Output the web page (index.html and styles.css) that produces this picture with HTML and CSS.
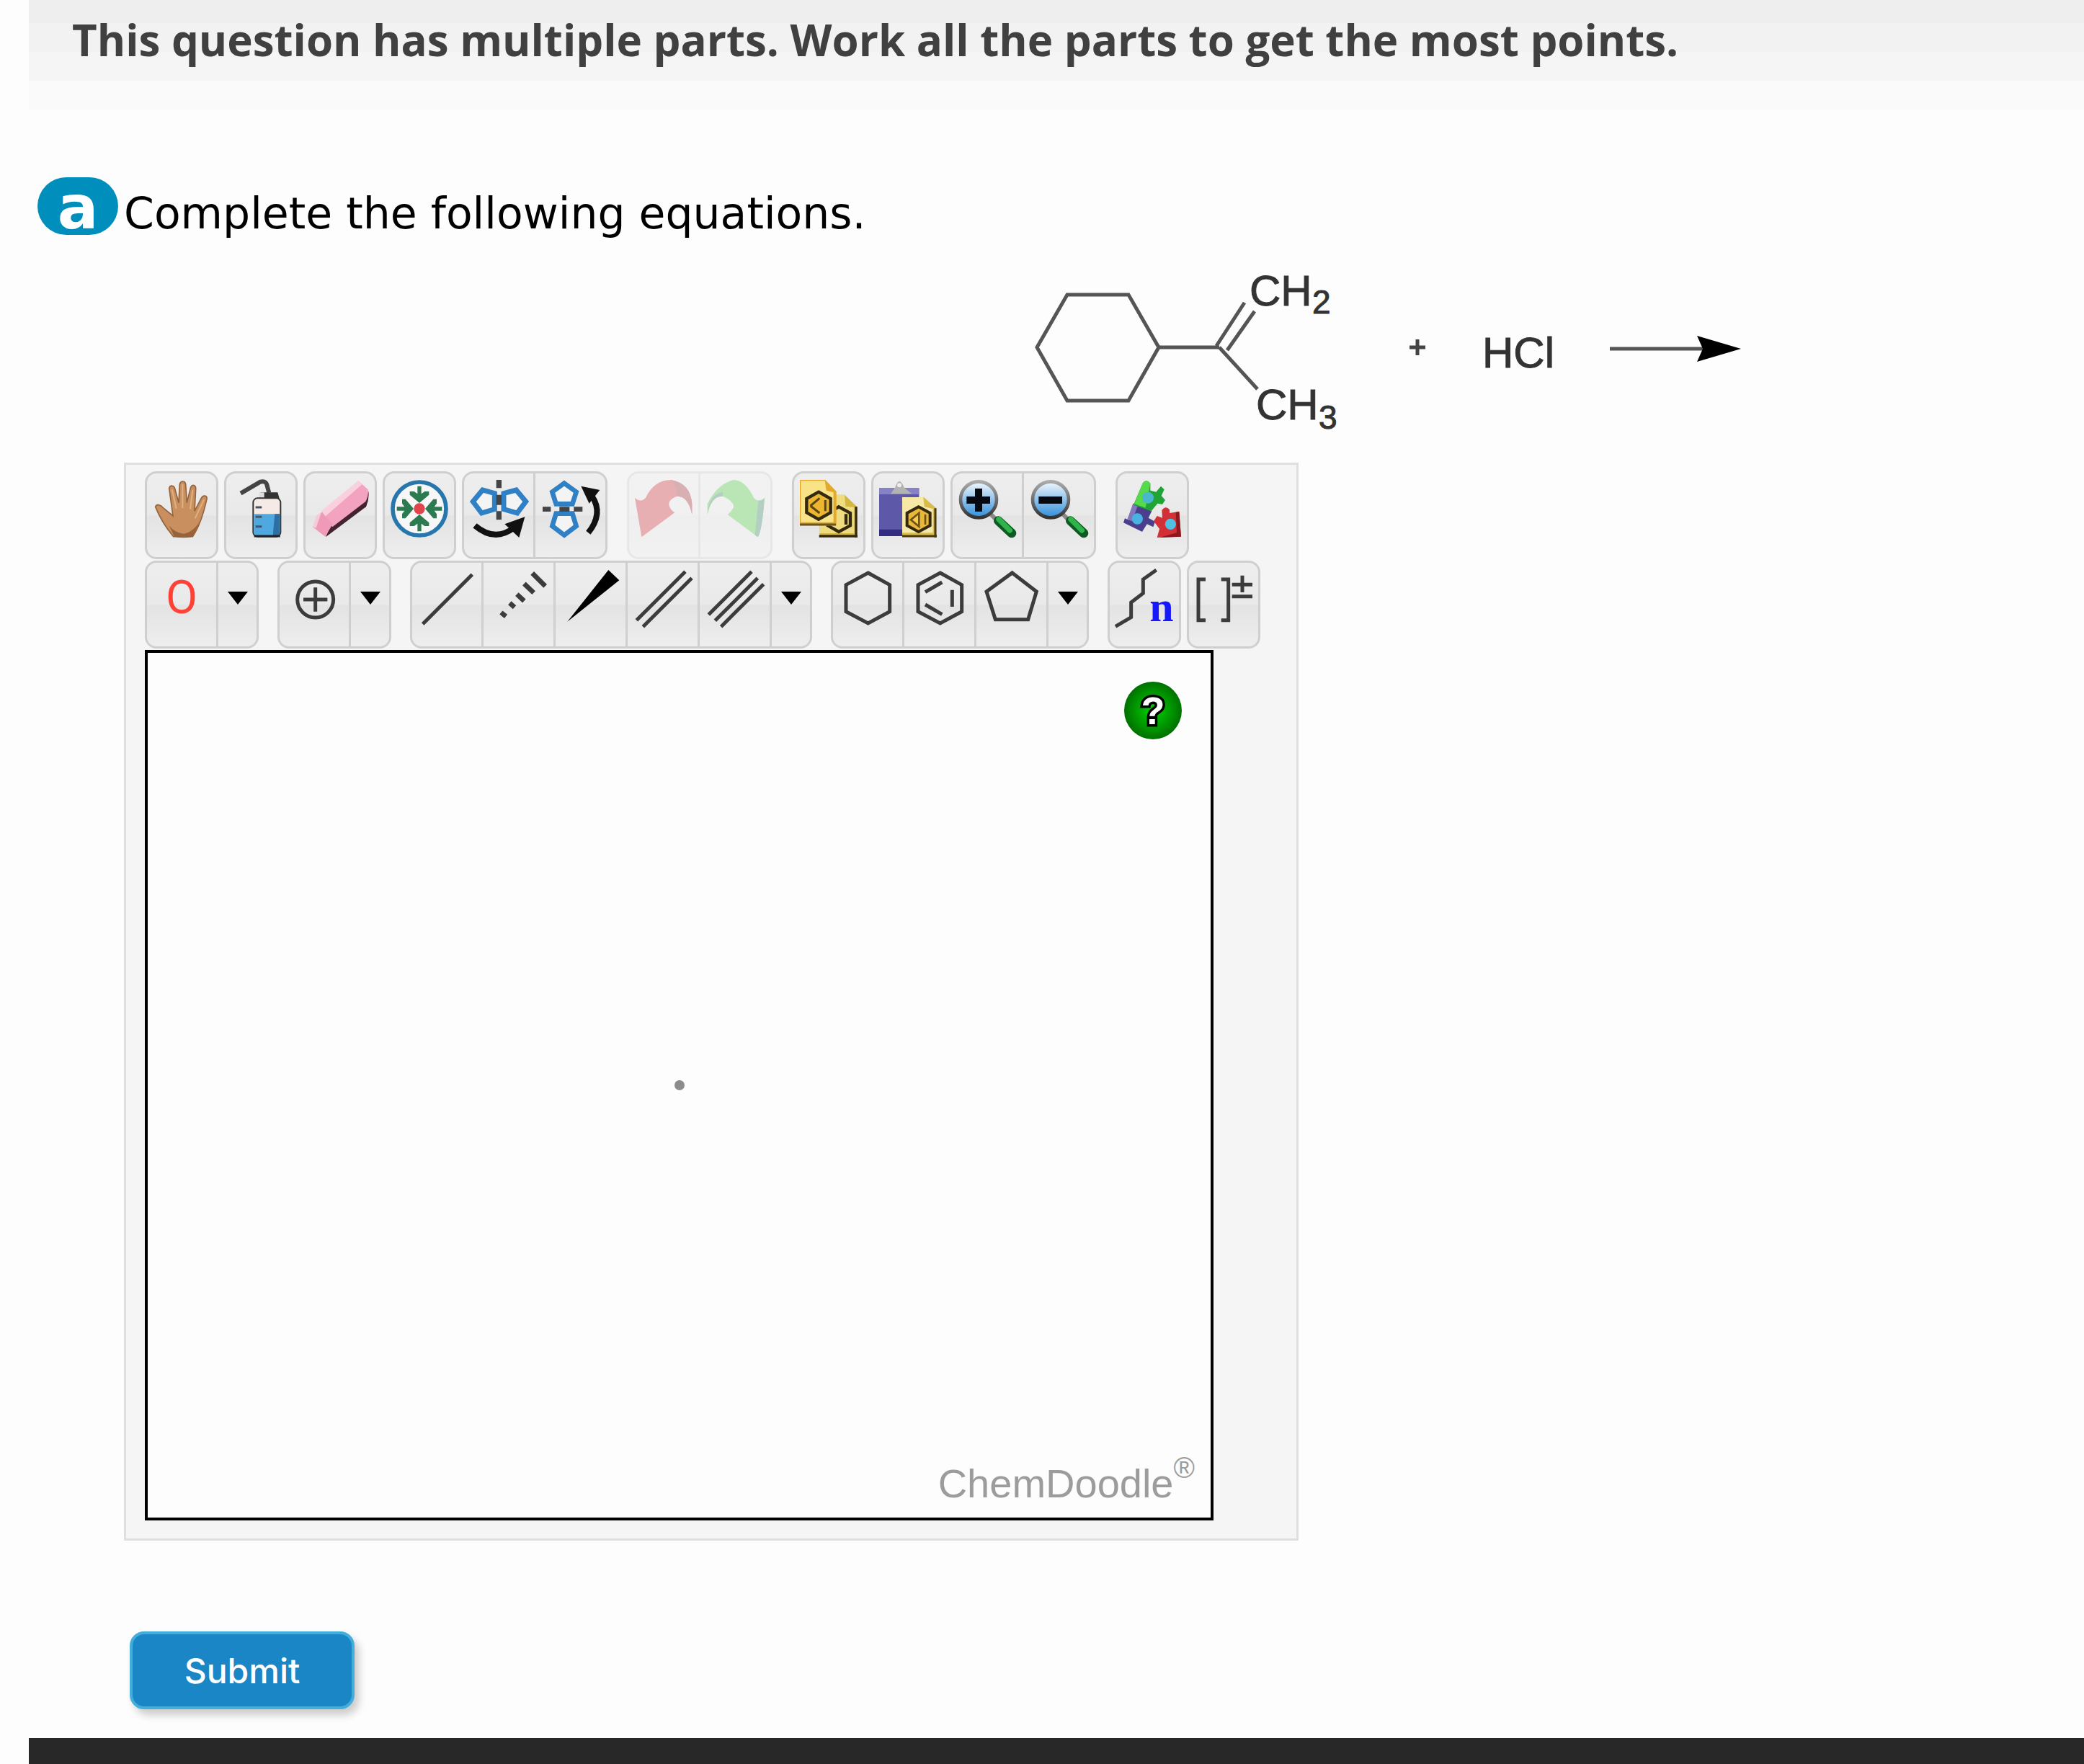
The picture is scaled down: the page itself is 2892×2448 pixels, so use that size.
FILE: index.html
```html
<!DOCTYPE html>
<html lang="en">
<head>
    <meta charset="UTF-8">
    <meta name="viewport" content="width=device-width, initial-scale=1.0">
    <title>Complete the following equations</title>
    <link rel="stylesheet" href="styles.css">
</head>
<body>
    <header class="notice">
        <h1>This question has multiple parts. Work all the parts to get the most points.</h1>
    </header>
    <main class="question">
        <div class="prompt">
            <span class="badge">a</span>
            <p>Complete the following equations.</p>
        </div>
        <div class="part">
            <svg class="equation" viewBox="0 0 1000 250" role="img" aria-label="Reaction with HCl">
                <g class="bonds">
                    <path d="M9 122 L51 49 H136 L178 122 L136 196 H51 Z"/>
                    <path d="M178 122 H262 M258 120 L297 60 M273 126 L311 72 M262 122 L315 180"/>
                </g>
                <text x="304" y="64">CH</text>
                <text class="sub" x="391" y="75">2</text>
                <text x="313" y="222">CH</text>
                <text class="sub" x="400" y="235">3</text>
                <path class="plus" d="M526 122 H548 M537 111 V133"/>
                <text x="627" y="150">HCl</text>
                <path class="bonds" d="M804 124 H935"/>
                <path d="M925 106 L986 124 L925 142 L933 124 Z"/>
            </svg>
            <div class="sketcher">
                <div class="toolbar">
                    <div class="group">
                        <button class="tool" title="Move"><svg viewBox="-6 0 240 240">
                            <path d="M80 236 C50 200 20 150 5 112 C10 98 28 105 36 115 L78 150 L62 35 C66 20 82 22 86 36 L102 95 L106 18 C110 2 128 2 131 18 L136 95 L152 30 C158 18 174 20 173 38 L168 130 L195 78 C202 62 222 62 219 80 C210 120 192 190 160 236 Z" fill="#c98f5e" stroke="#94643c" stroke-width="5"/>
                            <path d="M84 236 Q120 246 160 236 L192 170 Q160 220 120 224 Q85 220 62 190 Z" fill="#96633a"/>
                            <path d="M74 40 L92 120 M118 18 V118 M160 42 L150 122 M207 82 L170 160" fill="none" stroke="#dfb183" stroke-width="6"/>
                        </svg></button>
                    </div>
                    <div class="group">
                        <button class="tool" title="Clear"><svg viewBox="0 0 240 240">
                            <path d="M36 56 L118 8 Q142 2 146 24 L154 54" fill="none" stroke="#444" stroke-width="18"/>
                            <path d="M120 52 H190 L198 80 H116 Z" fill="#333"/>
                            <rect x="112" y="52" width="22" height="28" fill="#ddd"/>
                            <rect x="88" y="76" width="114" height="160" rx="18" fill="#f6eae6" stroke="#333" stroke-width="6"/>
                            <path d="M91 142 H199 V218 Q199 232 184 232 H106 Q91 232 91 218 Z" fill="#4fa9e0"/>
                            <path d="M178 142 H199 V218 Q199 232 184 232 H170 Z" fill="#2c6fa5"/>
                            <path d="M98 114 H124 M98 154 H124 M98 194 H124" stroke="#456" stroke-width="9"/>
                            <path d="M92 234 H200" stroke="#222" stroke-width="9"/>
                        </svg></button>
                    </div>
                    <div class="group">
                        <button class="tool" title="Erase"><svg viewBox="0 0 240 240">
                            <path d="M60 238 L228 112 Q242 80 238 48 L80 190 Z" fill="#43232f"/>
                            <path d="M196 4 L236 40 Q240 66 226 90 L88 196 L42 136 Z" fill="#f3a3bf"/>
                            <path d="M196 4 L42 128 L58 152 L212 18 Z" fill="#fad0de"/>
                            <path d="M42 134 L90 182 L58 236 L6 196 Z" fill="#ee9ab8"/>
                            <path d="M42 134 L22 148 L6 196 L20 200 Z" fill="#f8c9d9"/>
                        </svg></button>
                    </div>
                    <div class="group">
                        <button class="tool" title="Center"><svg viewBox="0 0 240 240">
                            <circle cx="120" cy="120" r="111" fill="#f7f7f7" stroke="#2777ad" stroke-width="17"/>
                            <g fill="#2b7a50">
                                <path d="M120 96 L80 62 V48 H98 L112 58 V26 H128 V58 L142 48 H160 V62 Z"/>
                                <path d="M120 144 L80 178 V192 H98 L112 182 V214 H128 V182 L142 192 H160 V178 Z"/>
                                <path d="M96 120 L62 80 H48 V98 L58 112 H26 V128 H58 L48 142 V160 H62 Z"/>
                                <path d="M144 120 L178 80 H192 V98 L182 112 H214 V128 H182 L192 142 V160 H178 Z"/>
                            </g>
                            <circle cx="120" cy="120" r="23" fill="#e0454c"/>
                        </svg></button>
                    </div>
                    <div class="group">
                        <button class="tool" title="Flip Horizontally"><svg viewBox="-3 0 240 240">
                            <path d="M10 90 L50 42 L100 56 V122 L46 138 Z M230 90 L190 42 L138 56 V122 L194 138 Z" fill="#f4f4f4" stroke="#2f80c4" stroke-width="21"/>
                            <path d="M118 0 V34 M118 62 V104 M118 130 V166" stroke="#444" stroke-width="22"/>
                            <path d="M18 190 Q100 260 180 200" fill="none" stroke="#111" stroke-width="24"/>
                            <path d="M226 154 L202 240 L142 184 Z" fill="#111"/>
                        </svg></button>
                        <button class="tool" title="Flip Vertically"><svg viewBox="-3 0 240 240">
                            <path d="M90 14 L140 50 L124 100 H56 L40 50 Z M90 230 L140 192 L124 140 H56 L40 192 Z" fill="#f4f4f4" stroke="#2f80c4" stroke-width="20"/>
                            <path d="M0 122 H34 M70 122 H112 M130 122 H166" stroke="#444" stroke-width="20"/>
                            <path d="M190 220 Q254 140 206 68" fill="none" stroke="#111" stroke-width="24"/>
                            <path d="M160 26 L238 42 L194 98 Z" fill="#111"/>
                        </svg></button>
                    </div>
                    <div class="group wide disabled">
                        <button class="tool" title="Undo" disabled><svg viewBox="0 0 240 240">
                            <path d="M0 74 Q24 96 44 76 Q80 0 150 0 Q232 14 238 100 V144 Q222 66 174 68 Q134 84 144 110 Q150 126 166 136 L28 238 Z" fill="#cf3038"/>
                            <path d="M150 0 Q232 14 238 100 V144 Q222 66 174 68 Q180 30 150 0 Z" fill="#a5323a"/>
                        </svg></button>
                        <button class="tool" title="Redo" disabled><svg viewBox="0 0 240 240">
                            <path d="M240 74 Q216 96 196 76 Q160 0 110 0 Q40 20 2 100 V144 Q18 66 66 68 Q106 84 112 110 Q108 126 86 144 L212 238 Q230 210 240 74 Z" fill="#50ca3e"/>
                            <path d="M240 74 Q230 88 214 86 L200 230 L212 238 Q230 210 240 74 Z M2 144 Q6 60 66 50 V68 Q18 66 2 144 Z" fill="#3c8b68"/>
                        </svg></button>
                    </div>
                    <div class="group wide">
                        <button class="tool" title="Copy"><svg viewBox="0 0 240 240">
                            <path d="M82 62 H186 L238 112 V238 H82 Z" fill="#d4b73e"/>
                            <path d="M82 62 H186 L190 110 L226 114 V222 H82 Z" fill="#efdc80"/>
                            <path d="M80 234 H240 M234 112 V240" stroke="#35290a" stroke-width="10"/>
                            <path d="M162 112 L210 138 V190 L162 216 L116 190 V138 Z M192 142 V186" fill="none" stroke="#33290f" stroke-width="13"/>
                            <path d="M0 0 H106 L152 48 V190 H0 Z" fill="#e2aa2c"/>
                            <path d="M4 4 H104 L110 44 L140 52 V176 H4 Z" fill="#f8e387"/>
                            <path d="M0 186 H150" stroke="#6b5620" stroke-width="9"/>
                            <path d="M78 50 L128 78 V136 L78 164 L28 136 V78 Z" fill="#edb62f" stroke="#33290f" stroke-width="13"/>
                            <path d="M44 108 L82 76 M44 108 L82 138 M106 84 V130" stroke="#5c4611" stroke-width="9"/>
                        </svg></button>
                    </div>
                    <div class="group">
                        <button class="tool" title="Paste"><svg viewBox="0 0 240 240">
                            <rect y="34" width="166" height="200" fill="#5e58a8"/>
                            <path d="M0 34 H166 V60 H0 Z" fill="#8782c5"/>
                            <path d="M0 206 H166 V234 H0 Z" fill="#332c83"/>
                            <path d="M48 58 L66 32 Q84 -20 104 32 L136 58 Z" fill="#b3b3b3"/>
                            <circle cx="84" cy="22" r="9" fill="#eee"/>
                            <path d="M96 72 H186 L238 118 V238 H96 Z" fill="#d8bc4c"/>
                            <path d="M96 72 H184 L188 112 L224 120 V220 H96 Z" fill="#f6e9a7"/>
                            <path d="M96 234 H240 M234 118 V240" stroke="#4a3a0b" stroke-width="9"/>
                            <path d="M164 112 L212 138 V190 L164 216 L116 190 V138 Z" fill="#e9b839" stroke="#33290f" stroke-width="12"/>
                            <path d="M132 166 L166 138 V194 Z M192 144 V186" fill="#f7ca49" stroke="#6b5317" stroke-width="8"/>
                        </svg></button>
                    </div>
                    <div class="group">
                        <button class="tool" title="Increase Scale"><svg viewBox="0 0 240 240">
                            <defs>
                                <linearGradient id="lens" x2="0" y2="1"><stop offset="0" stop-color="#f2f8fd"/><stop offset="1" stop-color="#2f8edb"/></linearGradient>
                                <linearGradient id="rim" x2="0" y2="1"><stop offset="0" stop-color="#aaa"/><stop offset="1" stop-color="#333"/></linearGradient>
                            </defs>
                            <path d="M136 144 L160 168" stroke="#888" stroke-width="18"/>
                            <path d="M166 170 L222 222" stroke="#0d5b23" stroke-width="38" stroke-linecap="round"/>
                            <path d="M168 164 L214 210" stroke="#2eb44b" stroke-width="22" stroke-linecap="round"/>
                            <circle cx="84" cy="82" r="75" fill="url(#lens)" stroke="url(#rim)" stroke-width="14"/>
                            <path d="M34 84 H132 M84 36 V132" stroke="#050a12" stroke-width="30"/>
                        </svg></button>
                        <button class="tool" title="Decrease Scale"><svg viewBox="0 0 240 240">
                            <path d="M136 144 L160 168" stroke="#888" stroke-width="18"/>
                            <path d="M166 170 L222 222" stroke="#0d5b23" stroke-width="38" stroke-linecap="round"/>
                            <path d="M168 164 L214 210" stroke="#2eb44b" stroke-width="22" stroke-linecap="round"/>
                            <circle cx="84" cy="82" r="75" fill="url(#lens)" stroke="url(#rim)" stroke-width="14"/>
                            <path d="M34 84 H132" stroke="#050a12" stroke-width="30"/>
                        </svg></button>
                    </div>
                    <div class="group wide">
                        <button class="tool" title="Templates"><svg viewBox="0 0 240 240">
                            <path d="M40 98 L118 130 L104 158 L132 174 L124 196 L98 184 L78 216 L0 178 L6 160 L24 168 Z" fill="#4a3f8c"/>
                            <path d="M40 98 L60 106 L36 172 L16 164 Z" fill="#8177bb"/>
                            <path d="M80 14 Q94 -6 112 14 V44 L136 50 L156 26 L170 40 L158 66 L174 84 L162 102 L142 98 L116 130 L42 104 Z" fill="#1fa436"/>
                            <path d="M80 14 Q94 -6 112 14 L92 116 L46 100 Z" fill="#56d94b"/>
                            <path d="M160 126 Q176 104 192 124 V138 L232 132 L240 236 L140 240 L150 204 L126 172 L140 150 L162 158 Z" fill="#d32f36"/>
                            <path d="M218 134 L232 132 L240 236 L150 240 L222 220 Z" fill="#8c1920"/>
                            <circle cx="102" cy="74" r="24" fill="#4bb6cf"/>
                            <circle cx="58" cy="162" r="23" fill="#48b3e3"/>
                            <circle cx="196" cy="184" r="23" fill="#4fbfe4"/>
                        </svg></button>
                    </div>
                </div>
                <div class="toolbar bonds-bar">
                    <div class="group">
                        <button class="tool element" title="Oxygen">O</button>
                        <button class="drop" title="More elements"><svg viewBox="0 0 28 18"><path d="M0 0 H28 L14 18 Z"/></svg></button>
                    </div>
                    <div class="group wide">
                        <button class="tool lines" title="Increase Charge"><svg viewBox="0 0 240 240"><path d="M75 126 H175 M125 76 V176"/><circle cx="125" cy="126" r="75"/></svg></button>
                        <button class="drop" title="More attributes"><svg viewBox="0 0 28 18"><path d="M0 0 H28 L14 18 Z"/></svg></button>
                    </div>
                    <div class="group wide">
                        <button class="tool lines" title="Single Bond"><svg viewBox="0 0 240 240"><path d="M20 228 L226 22"/></svg></button>
                        <button class="tool lines" title="Recessed Bond"><svg viewBox="0 0 240 240"><path stroke-width="20" d="M176 16 L230 70 M142 60 L182 98 M112 104 L142 132 M82 140 L102 158 M46 180 L66 196"/></svg></button>
                        <button class="tool" title="Protruding Bond"><svg viewBox="0 0 240 240"><path d="M22 218 L193 3 L238 46 Z"/></svg></button>
                        <button class="tool lines" title="Double Bond"><svg viewBox="0 0 240 240"><path d="M10 212 L213 10 M37 239 L240 37"/></svg></button>
                        <button class="tool lines" title="Triple Bond"><svg viewBox="0 0 240 240"><path d="M10 189 L189 10 M37 214 L214 37 M62 239 L239 62"/></svg></button>
                        <button class="drop" title="Other bonds"><svg viewBox="0 0 28 18"><path d="M0 0 H28 L14 18 Z"/></svg></button>
                    </div>
                    <div class="group wide">
                        <button class="tool lines" title="Cyclohexane"><svg viewBox="0 0 240 240"><path d="M122 15 L212 65 V176 L122 225 L30 176 V65 Z"/></svg></button>
                        <button class="tool lines" title="Benzene"><svg viewBox="0 0 240 240"><path d="M122 15 L212 65 V176 L122 225 L30 176 V65 Z M60 95 L130 54 M60 147 L130 188 M172 86 V156"/></svg></button>
                        <button class="tool lines" title="Cyclopentane"><svg viewBox="0 0 240 240"><path d="M122 15 L223 93 L188 209 H52 L15 93 Z"/></svg></button>
                        <button class="drop" title="Other rings"><svg viewBox="0 0 28 18"><path d="M0 0 H28 L14 18 Z"/></svg></button>
                    </div>
                    <div class="group wide">
                        <button class="tool lines" title="Repeat Unit"><svg viewBox="0 0 240 240"><path d="M0 238 L65 200 V138 L115 100 V42 L170 3"/><text x="142" y="215">n</text></svg></button>
                    </div>
                    <div class="group">
                        <button class="tool lines" title="Bracket"><svg viewBox="0 0 240 240"><path d="M45 42 H15 V212 H45 M110 42 H140 V212 H110 M155 64 H240 M198 26 V96 M155 113 H240"/></svg></button>
                    </div>
                </div>
                <div class="canvas">
                    <button class="help" title="Help"><svg viewBox="0 0 80 80"><text x="40" y="59">?</text></svg></button>
                    <span class="atom"></span>
                    <div class="brand">ChemDoodle<sup>®</sup></div>
                </div>
            </div>
            <button class="submit">Submit</button>
        </div>
    </main>
    <footer class="bottom-bar"></footer>
</body>
</html>
```
FILE: styles.css
```css
* {
    box-sizing: border-box;
}
body {
    margin: 0;
    padding-left: 40px;
    min-height: 100vh;
    display: flex;
    flex-direction: column;
    background: #fdfdfd;
    color: #000;
    font-family: "DejaVu Sans", sans-serif;
}
button {
    padding: 0;
    cursor: pointer;
}
.notice {
    height: 152px;
    padding: 13px 60px;
    background: linear-gradient(#eeeeee 32px, #f2f2f2 32px, #f2f2f2 72px, #f5f5f5 72px, #f5f5f5 112px, #fafafa 112px);
}
.notice h1 {
    margin: 0;
    font-family: "Open Sans", sans-serif;
    font-size: 60px;
    line-height: 84px;
    font-weight: 700;
    color: #404040;
    white-space: nowrap;
}
.question {
    padding: 94px 0 40px 12px;
}
.prompt {
    display: flex;
    align-items: center;
    gap: 8px;
    height: 80px;
}
.prompt p {
    margin: 0;
    padding-top: 20px;
    font-size: 60px;
    line-height: 80px;
    white-space: nowrap;
}
.badge {
    width: 112px;
    height: 80px;
    border-radius: 40px;
    background: #008ebd;
    color: #fff;
    font-size: 84px;
    line-height: 84px;
    font-weight: 700;
    text-align: center;
}
.part {
    padding-left: 120px;
}
.equation {
    display: block;
    width: 1000px;
    height: 250px;
    margin: 34px 0 32px 1258px;
    font-family: "Liberation Sans", Arial, sans-serif;
    font-size: 60px;
}
.equation text {
    fill: #333;
    stroke: #333;
    stroke-width: 1px;
}
.equation .sub {
    font-size: 46px;
}
.equation .bonds {
    fill: none;
    stroke: #555;
    stroke-width: 5px;
}
.equation .plus {
    stroke: #444;
    stroke-width: 5px;
}

/* sketcher */
.sketcher {
    width: fit-content;
    padding: 9px 50px 25px 26px;
    background: #f5f5f5;
    border: 3px solid #dfdfdf;
}
.toolbar {
    display: flex;
    gap: 8px;
    margin-bottom: 2px;
}
.group {
    display: flex;
}
.group.wide {
    margin-left: 19px;
}
.bonds-bar .wide {
    margin-left: 18px;
}
.group.disabled {
    opacity: 0.35;
}
.tool, .drop {
    width: 102px;
    height: 122px;
    display: flex;
    justify-content: center;
    border: 3px solid #cfcfcf;
    background: linear-gradient(#eeeeee, #e9e9e9 50%, #e3e3e3 51%, #eeeeee);
}
.tool + .tool {
    width: 100px;
    border-left: 0;
}
.tool:first-child {
    border-radius: 16px 0 0 16px;
}
.tool:last-child, .drop {
    border-radius: 0 16px 16px 0;
}
.tool:only-child {
    border-radius: 16px;
}
.tool:not(:first-child):not(:last-child) {
    border-radius: 0;
}
.tool svg {
    width: 80px;
    height: 80px;
    margin-top: 9px;
    overflow: visible;
}
.drop {
    width: 56px;
    border-left: 0;
}
.drop svg {
    width: 28px;
    height: 18px;
    margin-top: 40px;
}
.element {
    padding-top: 9px;
    font-family: Roboto, sans-serif;
    font-size: 64px;
    line-height: 80px;
    color: #ff4136;
}
.lines svg {
    fill: none;
    stroke: #3c3c3c;
    stroke-width: 15px;
}
.lines text {
    fill: #1818ff;
    stroke: none;
    font-family: "Liberation Serif", serif;
    font-size: 180px;
    font-weight: 700;
}
.canvas {
    position: relative;
    width: 1483px;
    height: 1208px;
    background: #fdfdfd;
    border: 4px solid #000;
}
.help {
    position: absolute;
    top: 40px;
    right: 40px;
    width: 80px;
    height: 80px;
    border: 0;
    border-radius: 50%;
    background: radial-gradient(circle, #00d200, #009600 45%, #006e00 72%);
}
.help svg {
    display: block;
    width: 80px;
    height: 80px;
}
.help text {
    fill: #fff;
    stroke: #000;
    stroke-width: 7px;
    paint-order: stroke;
    text-anchor: middle;
    font-family: "Liberation Sans", Arial, sans-serif;
    font-size: 54px;
    font-weight: 700;
}
.atom {
    position: absolute;
    top: 50%;
    left: 50%;
    width: 14px;
    height: 14px;
    margin: -7px;
    border-radius: 50%;
    background: #8c8c8c;
}
.brand {
    position: absolute;
    right: 22px;
    bottom: 15px;
    font-family: "Liberation Sans", Arial, sans-serif;
    font-size: 56px;
    line-height: 64px;
    color: #9c9c9c;
}
.brand sup {
    font-size: 40px;
    line-height: 0;
    vertical-align: 27px;
}
.submit {
    display: block;
    width: 312px;
    height: 108px;
    margin: 126px 0 0 8px;
    border: 4px solid #43aedb;
    border-radius: 20px;
    background: #1b86c6;
    box-shadow: 6px 8px 12px rgba(0, 0, 0, 0.2);
    color: #fff;
    font-family: Inter, sans-serif;
    font-size: 48px;
    font-weight: 500;
}
.bottom-bar {
    flex: 1;
    min-height: 36px;
    background: #282828;
}
```
